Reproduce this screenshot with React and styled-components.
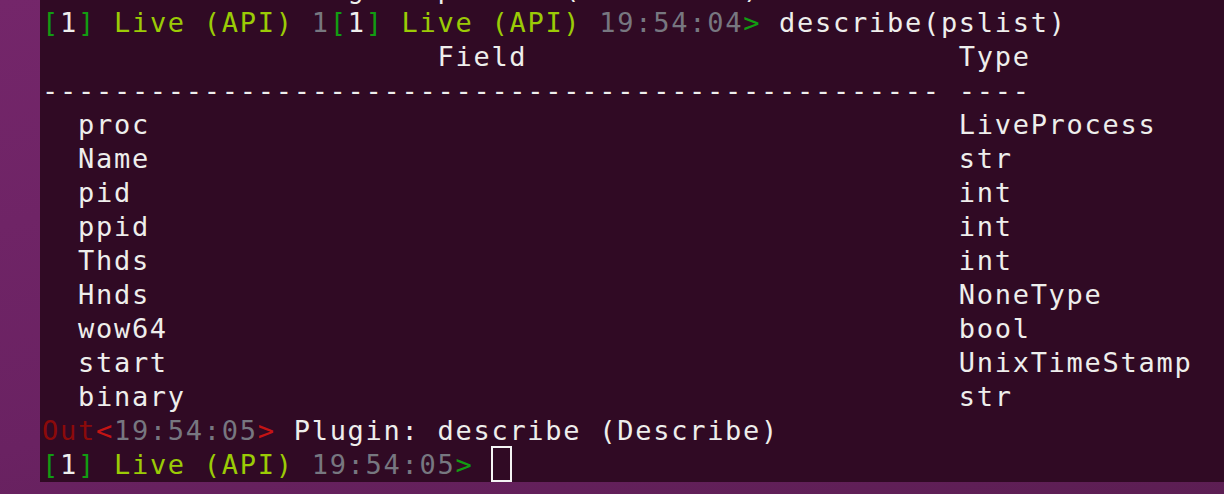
import React from "react";
import styled, { createGlobalStyle } from "styled-components";

const Global = createGlobalStyle`
  html, body { margin: 0; padding: 0; }
  body { background: #5e1f55; overflow: hidden; }
`;

const Desktop = styled.div`
  width: 1224px;
  height: 494px;
  box-sizing: border-box;
  padding: 0 0 12px 40px;
  display: flex;
  background: linear-gradient(165deg, #74266a 0%, #6a2262 55%, #5c1e53 100%);
`;

const Terminal = styled.div`
  flex: 1;
  height: 482px;
  box-sizing: border-box;
  background: #300a24;
  overflow: hidden;
  display: flex;
  flex-direction: column;
  justify-content: flex-end;
  padding: 0 0 0 2px;
  font-family: "DejaVu Sans Mono", "Liberation Mono", monospace;
  font-size: 27px;
  letter-spacing: 1.72px;
  line-height: 34px;
  color: #eeeeec;
`;

const Line = styled.div`
  height: 34px;
  flex: none;
  white-space: pre;
`;

const C = {
  white: "#eeeeec",
  green: "#129c12",
  lime: "#9bcb06",
  grey: "#777780",
  dred: "#8c0a0a",
  red: "#c41414",
};

const Seg = styled.span`
  color: ${(p) => C[p.$c] || C.white};
`;

const Cursor = styled.span`
  display: inline-block;
  width: 21px;
  height: 36px;
  box-sizing: border-box;
  border: 2px solid #f4f4f4;
  vertical-align: top;
  margin-top: -2px;
`;

const Prompt = ({ stray, time }) => (
  <>
    <Seg $c="green">[</Seg>
    <Seg>1</Seg>
    <Seg $c="green">]</Seg>
    <Seg $c="lime"> Live (API) </Seg>
    {stray && <Seg $c="grey">{stray}</Seg>}
    {time && (
      <>
        <Seg $c="grey">{time}</Seg>
        <Seg $c="green">&gt;</Seg>
        <Seg> </Seg>
      </>
    )}
  </>
);

const rows = [
  ["proc", "LiveProcess"],
  ["Name", "str"],
  ["pid", "int"],
  ["ppid", "int"],
  ["Thds", "int"],
  ["Hnds", "NoneType"],
  ["wow64", "bool"],
  ["start", "UnixTimeStamp"],
  ["binary", "str"],
];

const pad = (s, n) => s + " ".repeat(Math.max(0, n - s.length));

export default function App() {
  return (
    <>
      <Global />
      <Desktop>
        <Terminal>
          <Line>
            <Seg>{"                 g    p      (         )"}</Seg>
          </Line>
          <Line>
            <Prompt stray="1" />
            <Prompt time="19:54:04" />
            <Seg>describe(pslist)</Seg>
          </Line>
          <Line>{pad("", 22) + pad("Field", 29) + "Type"}</Line>
          <Line>{"-".repeat(50) + " ----"}</Line>
          {rows.map(([f, t]) => (
            <Line key={f}>{"  " + pad(f, 49) + t}</Line>
          ))}
          <Line>
            <Seg $c="dred">Out</Seg>
            <Seg $c="red">&lt;</Seg>
            <Seg $c="grey">19:54:05</Seg>
            <Seg $c="red">&gt;</Seg>
            <Seg> Plugin: describe (Describe)</Seg>
          </Line>
          <Line>
            <Prompt time="19:54:05" />
            <Cursor />
          </Line>
        </Terminal>
      </Desktop>
    </>
  );
}
